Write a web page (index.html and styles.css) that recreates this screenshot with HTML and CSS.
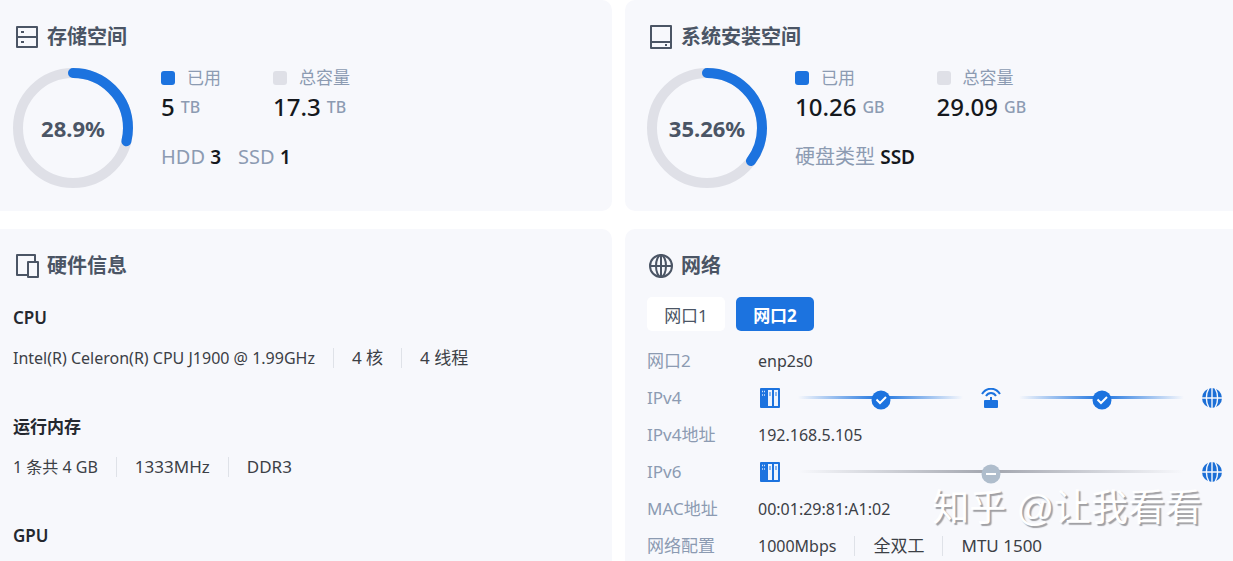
FILE: index.html
```html
<!DOCTYPE html>
<html lang="zh-CN">
<head>
    <meta charset="UTF-8">
    <meta name="viewport" content="width=device-width, initial-scale=1.0">
    <title>设备信息</title>
    <link rel="stylesheet" href="styles.css">
</head>
<body>
    <!-- 公用图标 -->
    <svg class="symbols" aria-hidden="true">
        <symbol id="nas" viewBox="0 0 20 20">
            <rect width="20" height="20" rx="1" fill="#1c73df"/>
            <rect x="8" y="2" width="4" height="16" fill="#eef4fd"/>
            <rect x="14" y="2" width="4" height="16" fill="#eef4fd"/>
            <path d="M10 4v4M16 4v4" stroke="#6aa3ea" stroke-width="1.5"/>
            <path d="M2 3.5h3M2 7h3" stroke="#cfe1f9" stroke-width="1.5" stroke-dasharray="1 1"/>
        </symbol>
        <symbol id="world" viewBox="0 0 20 20">
            <circle cx="10" cy="10" r="10" fill="#1c6fd6"/>
            <path d="M0 10h20M10 0v20M7 0C3.5 6 3.5 14 7 20M13 0c3.5 6 3.5 14 0 20" fill="none" stroke="#f7f8fc" stroke-width="1.4"/>
        </symbol>
        <symbol id="ok" viewBox="0 0 20 20">
            <circle cx="10" cy="10" r="9.5" fill="#1c73df"/>
            <path d="M5.5 9.5l3.5 3.5 6-6" fill="none" stroke="#fff" stroke-width="2"/>
        </symbol>
    </svg>

    <main class="dashboard">
        <section class="card">
            <h2 class="card-title">
                <svg class="title-icon" viewBox="0 0 24 24"><path d="M2 2h20v20H2zM2 12h20"/><path d="M6 7h3M6 17h3"/></svg>
                存储空间
            </h2>
            <div class="usage">
                <div class="ring">
                    <svg viewBox="0 0 120 120">
                        <circle class="ring-track" cx="60" cy="60" r="55"/>
                        <circle class="ring-value" cx="60" cy="60" r="55" pathLength="100" stroke-dasharray="28.9 100"/>
                    </svg>
                    <span class="ring-text">28.9%</span>
                </div>
                <div class="usage-info">
                    <dl class="stats">
                        <div><dt><i class="dot used"></i>已用</dt><dd>5 <small>TB</small></dd></div>
                        <div><dt><i class="dot"></i>总容量</dt><dd>17.3 <small>TB</small></dd></div>
                    </dl>
                    <p class="disks"><span>HDD <b>3</b></span><span>SSD <b>1</b></span></p>
                </div>
            </div>
        </section>

        <section class="card">
            <h2 class="card-title">
                <svg class="title-icon" viewBox="0 0 24 24"><path d="M2 1h20v22H2zM2 17h20"/><path d="M16 20h2"/></svg>
                系统安装空间
            </h2>
            <div class="usage">
                <div class="ring">
                    <svg viewBox="0 0 120 120">
                        <circle class="ring-track" cx="60" cy="60" r="55"/>
                        <circle class="ring-value" cx="60" cy="60" r="55" pathLength="100" stroke-dasharray="35.26 100"/>
                    </svg>
                    <span class="ring-text">35.26%</span>
                </div>
                <div class="usage-info">
                    <dl class="stats">
                        <div><dt><i class="dot used"></i>已用</dt><dd>10.26 <small>GB</small></dd></div>
                        <div><dt><i class="dot"></i>总容量</dt><dd>29.09 <small>GB</small></dd></div>
                    </dl>
                    <p class="disks"><span>硬盘类型 <b>SSD</b></span></p>
                </div>
            </div>
        </section>

        <section class="card">
            <h2 class="card-title">
                <svg class="title-icon" viewBox="0 0 24 24"><path d="M12 21H2V1h18v6M13 8h10v15H13z"/></svg>
                硬件信息
            </h2>
            <div class="hardware">
                <div>
                    <h3>CPU</h3>
                    <ul class="specs"><li>Intel(R) Celeron(R) CPU J1900 @ 1.99GHz</li><li>4 核</li><li>4 线程</li></ul>
                </div>
                <div>
                    <h3>运行内存</h3>
                    <ul class="specs"><li>1 条共 4 GB</li><li>1333MHz</li><li>DDR3</li></ul>
                </div>
                <div>
                    <h3>GPU</h3>
                </div>
            </div>
        </section>

        <section class="card">
            <h2 class="card-title">
                <svg class="title-icon" viewBox="0 0 24 24"><circle cx="12" cy="12" r="11"/><ellipse cx="12" cy="12" rx="5" ry="11"/><path d="M1 12h22M12 1v22"/></svg>
                网络
            </h2>
            <div class="tabs">
                <button class="tab" type="button">网口1</button>
                <button class="tab active" type="button">网口2</button>
            </div>
            <dl class="network">
                <dt>网口2</dt>
                <dd>enp2s0</dd>
                <dt>IPv4</dt>
                <dd class="route">
                    <svg class="node"><use href="#nas"/></svg>
                    <span class="link"><svg class="badge"><use href="#ok"/></svg></span>
                    <svg class="node" viewBox="0 0 20 20">
                        <rect x="3" y="12" width="14" height="8" rx="1" fill="#1c73df"/>
                        <path d="M10 9v4M1 6c4.5-7 13.5-7 18 0M5 8c2.5-4 7.5-4 10 0" fill="none" stroke="#1c73df" stroke-width="2"/>
                    </svg>
                    <span class="link"><svg class="badge"><use href="#ok"/></svg></span>
                    <svg class="node"><use href="#world"/></svg>
                </dd>
                <dt>IPv4地址</dt>
                <dd>192.168.5.105</dd>
                <dt>IPv6</dt>
                <dd class="route">
                    <svg class="node"><use href="#nas"/></svg>
                    <span class="link off">
                        <svg class="badge" viewBox="0 0 20 20"><circle cx="10" cy="10" r="9.5" fill="#afbdcc"/><path d="M5 10h10" stroke="#fff" stroke-width="2"/></svg>
                    </span>
                    <svg class="node"><use href="#world"/></svg>
                </dd>
                <dt>MAC地址</dt>
                <dd>00:01:29:81:A1:02</dd>
                <dt>网络配置</dt>
                <dd><ul class="specs"><li>1000Mbps</li><li>全双工</li><li>MTU 1500</li></ul></dd>
            </dl>
        </section>
    </main>

    <div class="watermark">知乎 @让我看看</div>
</body>
</html>
```
FILE: styles.css
```css
* {
    box-sizing: border-box;
    margin: 0;
    padding: 0;
}
body {
    position: relative;
    height: 100vh;
    overflow: hidden;
    background: #fff;
    color: #3c4046;
    font-family: "Noto Sans", "Noto Sans CJK SC", sans-serif;
    font-size: 16px;
    line-height: 26px;
}
ul {
    list-style: none;
}
.symbols {
    display: none;
}
.dashboard {
    display: grid;
    grid-template-columns: 612fr 608fr;
    grid-template-rows: auto 1fr;
    gap: 18px 13px;
    height: 100%;
}
.card {
    min-width: 0;
    padding: 23px 11px 23px 22px;
    background: #f7f8fc;
    border-radius: 10px 0 0 10px;
}
.card:nth-child(odd) {
    padding-left: 13px;
    border-radius: 0 10px 10px 0;
}
.card:nth-child(n+3) {
    border-bottom-left-radius: 0;
    border-bottom-right-radius: 0;
}
.card-title {
    display: flex;
    align-items: center;
    gap: 8px;
    margin-bottom: 17px;
    padding-left: 2px;
    color: #4b5565;
    font-size: 20px;
    line-height: 28px;
}
.title-icon {
    width: 24px;
    height: 24px;
    fill: none;
    stroke: #4b5565;
    stroke-width: 2;
    stroke-linejoin: round;
}

/* 容量 */
.usage {
    display: flex;
    gap: 28px;
}
.ring {
    display: grid;
    place-items: center;
    width: 120px;
    height: 120px;
}
.ring > * {
    grid-area: 1 / 1;
}
.ring svg {
    width: 120px;
    height: 120px;
    transform: rotate(-90deg);
}
.ring circle {
    fill: none;
    stroke-width: 10;
}
.ring-track {
    stroke: #dfe0e7;
}
.ring-value {
    stroke: #1c73df;
    stroke-linecap: round;
}
.ring-text {
    color: #4b5565;
    font-size: 22px;
    font-weight: bold;
}
.stats {
    display: flex;
    gap: 52px;
}
.stats dt {
    display: flex;
    align-items: center;
    gap: 12px;
    height: 20px;
    color: #8c9bb2;
    font-size: 17px;
}
.dot {
    width: 14px;
    height: 14px;
    background: #dfe0e7;
    border-radius: 3px;
}
.dot.used {
    background: #1c73df;
}
.stats dd {
    display: flex;
    align-items: center;
    gap: 6px;
    color: #15181d;
    font-size: 24px;
    font-weight: 500;
    line-height: 38px;
}
.stats small {
    color: #8c9bb2;
    font-size: 16px;
}
.disks {
    display: flex;
    gap: 17px;
    margin-top: 19px;
    color: #8c9bb2;
    font-size: 20px;
    line-height: 24px;
}
.disks b {
    color: #15181d;
    font-size: 19px;
    font-weight: 600;
}

/* 硬件 */
.hardware {
    display: grid;
    gap: 43px;
    padding-top: 8px;
}
.hardware h3 {
    margin-bottom: 14px;
    color: #24282f;
    font-size: 17px;
    font-weight: 600;
}
.specs {
    display: flex;
    align-items: center;
}
.specs li + li {
    display: flex;
    align-items: center;
    font-size: 17px;
}
.specs li + li::before {
    content: "";
    width: 1px;
    height: 20px;
    margin: 0 18px;
    background: #dfe2e8;
}

/* 网络 */
.tabs {
    display: flex;
    gap: 11px;
    margin-bottom: 11px;
}
.tab {
    width: 78px;
    height: 34px;
    border: none;
    border-radius: 5px;
    background: #fff;
    color: #4b5565;
    font-family: inherit;
    font-size: 17px;
    cursor: pointer;
}
.tab.active {
    background: #1c73df;
    color: #fff;
    font-weight: bold;
}
.network {
    display: grid;
    grid-template-columns: 111px 1fr;
    grid-auto-rows: 37px;
    align-items: center;
}
.network dt {
    color: #8c9bb2;
    font-size: 17px;
}
.route {
    display: flex;
    align-items: center;
    gap: 18px;
    padding-left: 2px;
}
.node {
    flex: none;
    width: 20px;
    height: 20px;
}
.link {
    position: relative;
    flex: 1;
    height: 3px;
    background: linear-gradient(to right, transparent, #1c73df 50%, transparent);
}
.link.off {
    background: linear-gradient(to right, transparent, #a2a5ae 50%, transparent);
}
.badge {
    position: absolute;
    top: -6px;
    left: calc(50% - 10px);
    width: 20px;
    height: 20px;
}

.watermark {
    position: absolute;
    right: 31px;
    bottom: 34px;
    color: #fff;
    font-family: "Liberation Sans", "Noto Sans CJK SC", sans-serif;
    font-size: 37px;
    line-height: 37px;
    text-shadow: 2px 2px 1px #a0a0a4;
}
```
